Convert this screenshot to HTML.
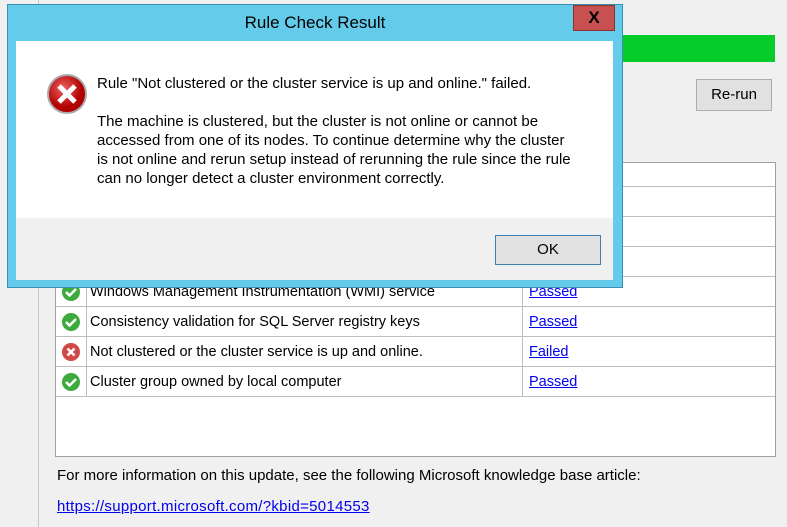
<!DOCTYPE html>
<html><head><style>
body{margin:0;width:787px;height:527px;background:#f0f0f0;position:relative;overflow:hidden;font-family:"Liberation Sans",sans-serif;font-size:14.5px;color:#000}
.a{position:absolute}
.tbl{left:55px;top:162px;width:719px;height:293px;background:#fff;border:1px solid #a0a0a0}
.row{position:absolute;left:0;width:719px;height:29px;border-bottom:1px solid #bdbdbd}
.row .c1{position:absolute;left:30px;top:0;width:1px;height:30px;background:#bdbdbd}
.row .c2{position:absolute;left:466px;top:0;width:1px;height:30px;background:#bdbdbd}
.row .t{position:absolute;left:34px;top:7px}
.row .l{position:absolute;left:473px;top:7px;color:#0000ee;text-decoration:underline}
.row svg{position:absolute;left:5px;top:5px}
.btn{background:#e1e1e1;border:1px solid #adadad;text-align:center;box-sizing:border-box}
</style></head><body>
<div class="a" style="left:38px;top:0;width:1px;height:527px;background:#c8c8c8"></div>
<div class="a" style="left:622px;top:35px;width:153px;height:27px;background:#06cc2a"></div>
<div class="a btn" style="left:696px;top:79px;width:76px;height:32px;line-height:30px;font-size:15px">Re-run</div>
<div class="a tbl">
 <div class="row" style="top:0;height:23px;background:#fff"></div>
 <div class="row" style="top:24px"></div>
 <div class="row" style="top:54px"></div>
 <div class="row" style="top:84px"></div>
 <div class="row" style="top:114px"><div class="c1"></div><div class="c2"></div>
  <svg width="20" height="20"><circle cx="10" cy="10" r="9" fill="#3daa3d"/><path d="M5 10l3.5 3.5L15 7" stroke="#fff" stroke-width="2.5" fill="none"/></svg>
  <span class="t">Windows Management Instrumentation (WMI) service</span><span class="l">Passed</span></div>
 <div class="row" style="top:144px"><div class="c1"></div><div class="c2"></div>
  <svg width="20" height="20"><circle cx="10" cy="10" r="9" fill="#3daa3d"/><path d="M5 10l3.5 3.5L15 7" stroke="#fff" stroke-width="2.5" fill="none"/></svg>
  <span class="t">Consistency validation for SQL Server registry keys</span><span class="l">Passed</span></div>
 <div class="row" style="top:174px"><div class="c1"></div><div class="c2"></div>
  <svg width="20" height="20"><circle cx="10" cy="10" r="9" fill="#d04848"/><path d="M6.5 6.5l7 7M13.5 6.5l-7 7" stroke="#fff" stroke-width="2.5"/></svg>
  <span class="t">Not clustered or the cluster service is up and online.</span><span class="l">Failed</span></div>
 <div class="row" style="top:204px"><div class="c1"></div><div class="c2"></div>
  <svg width="20" height="20"><circle cx="10" cy="10" r="9" fill="#3daa3d"/><path d="M5 10l3.5 3.5L15 7" stroke="#fff" stroke-width="2.5" fill="none"/></svg>
  <span class="t">Cluster group owned by local computer</span><span class="l">Passed</span></div>
</div>
<div class="a" style="left:57px;top:467px;font-size:15px;letter-spacing:0px">For more information on this update, see the following Microsoft knowledge base article:</div>
<div class="a" style="left:57px;top:498px;font-size:15px;letter-spacing:0.3px;color:#0000ee;text-decoration:underline">https://support.microsoft.com/?kbid=5014553</div>

<div class="a" style="left:7px;top:4px;width:614px;height:282px;background:#65cbea;border:1px solid #3b8fb0"></div>
<div class="a" style="left:7px;top:13px;width:616px;text-align:center;font-size:17px">Rule Check Result</div>
<div class="a" style="left:573px;top:5px;width:42px;height:26px;background:#c75050;border:1px solid #8a3030;box-sizing:border-box;text-align:center;font-weight:bold;font-size:17px;line-height:24px">X</div>
<div class="a" style="left:16px;top:41px;width:597px;height:239px;background:#f0f0f0"></div>
<div class="a" style="left:16px;top:41px;width:597px;height:177px;background:#fff"></div>
<svg class="a" style="left:46px;top:73px" width="42" height="42"><defs><radialGradient id="g" cx="40%" cy="35%"><stop offset="0" stop-color="#f06060"/><stop offset="1" stop-color="#b00000"/></radialGradient></defs><circle cx="21" cy="21" r="19" fill="url(#g)" stroke="#aaa" stroke-width="2"/><path d="M13 13l16 16M29 13L13 29" stroke="#fff" stroke-width="5"/></svg>
<div class="a" style="left:97px;top:74px;font-size:15px;line-height:19px;width:510px">Rule "Not clustered or the cluster service is up and online." failed.</div>
<div class="a" style="left:97px;top:112px;font-size:15px;line-height:19px;width:510px;white-space:nowrap">The machine is clustered, but the cluster is not online or cannot be<br>accessed from one of its nodes. To continue determine why the cluster<br>is not online and rerun setup instead of rerunning the rule since the rule<br>can no longer detect a cluster environment correctly.</div>
<div class="a btn" style="left:495px;top:235px;width:106px;height:30px;line-height:28px;font-size:15px;border-color:#3c7fb1">OK</div>
</body></html>
